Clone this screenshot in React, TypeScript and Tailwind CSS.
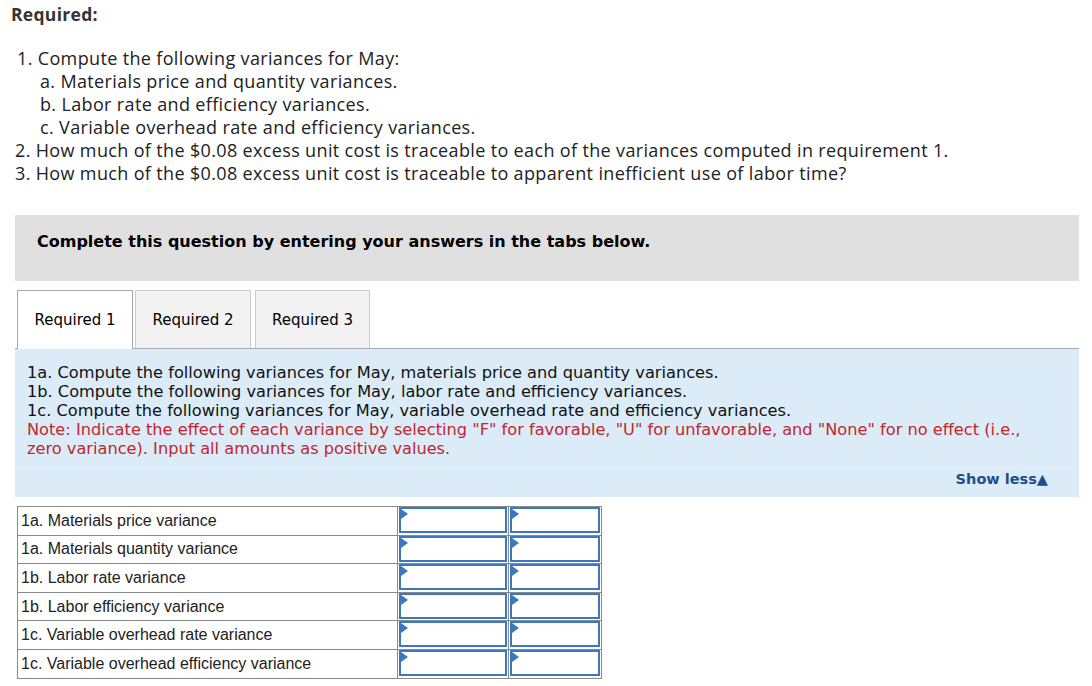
import React from 'react';

const rows = [
  '1a. Materials price variance',
  '1a. Materials quantity variance',
  '1b. Labor rate variance',
  '1b. Labor efficiency variance',
  '1c. Variable overhead rate variance',
  '1c. Variable overhead efficiency variance',
];

const AnswerCell: React.FC<{ width: string }> = ({ width }) => (
  <td className={`${width} p-0 border border-[#8a8a8a] align-top`}>
    <div className="relative h-[26px] border-2 border-[#3d77bf] bg-white mx-[1px]">
      {/* little dropdown flag in the corner */}
      <svg className="absolute left-0 top-0" width="7" height="10" viewBox="0 0 7 10">
        <polygon points="0,0 7,5 0,10" fill="#3d77bf" />
      </svg>
    </div>
  </td>
);

export default function App() {
  return (
    <div className="w-[1092px] h-[686px] bg-white overflow-hidden text-[#222]">
      {/* Requirement list */}
      <div className="pl-[11px] pt-[3px] font-['Open_Sans',sans-serif]">
        <div className="text-[17.5px] font-bold text-[#333] leading-[22px] tracking-[0.3px]">Required:</div>
        <ol className="mt-[22px] text-[18px] leading-[23px] text-[#222] tracking-[0.35px]">
          <li className="pl-[6px]">
            1. Compute the following variances for May:
            <div className="pl-[23px]">
              <div>a. Materials price and quantity variances.</div>
              <div>b. Labor rate and efficiency variances.</div>
              <div>c. Variable overhead rate and efficiency variances.</div>
            </div>
          </li>
          <li className="pl-[4px]">
            2. How much of the $0.08 excess unit cost is traceable to each of the variances computed in requirement 1.
          </li>
          <li className="pl-[4px]">
            3. How much of the $0.08 excess unit cost is traceable to apparent inefficient use of labor time?
          </li>
        </ol>
      </div>

      <div className="ml-[15px] mt-[30px] w-[1064px]">
        {/* Instruction banner */}
        <div className="h-[66px] bg-[#e0e0e0] pl-[22px] pt-[17px] leading-[20px] font-['DejaVu_Sans',Verdana,sans-serif] font-bold text-[16px] text-black">
          Complete this question by entering your answers in the tabs below.
        </div>

        {/* Tabs */}
        <div className="mt-[9px] flex items-end h-[58px] pl-[2px] gap-[2px] font-['DejaVu_Sans',Verdana,sans-serif] text-[15px] text-black">
          <div className="w-[116px] bg-white border border-b-0 border-[#a8a8a8] flex items-center justify-center relative z-10 mb-[-1px] h-[59px] pt-[1px]">
            Required 1
          </div>
          <div className="h-[58px] w-[116px] bg-[#f2f2f2] border border-[#cccccc] border-b-0 flex items-center justify-center pt-[1px]">
            Required 2
          </div>
          <div className="h-[58px] w-[115px] ml-[2px] bg-[#f2f2f2] border border-[#cccccc] border-b-0 flex items-center justify-center pt-[1px]">
            Required 3
          </div>
        </div>

        {/* Instructions panel */}
        <div className="h-[149px] bg-[#dbebf8] border-t border-[#aaaaaa] font-['DejaVu_Sans',Verdana,sans-serif] text-[16.2px] leading-[19px]">
          <div className="h-[120px] pl-[12px] pt-[14px] border-b border-[#e2eefa]">
            <div className="text-[#111]">1a. Compute the following variances for May, materials price and quantity variances.</div>
            <div className="text-[#111]">1b. Compute the following variances for May, labor rate and efficiency variances.</div>
            <div className="text-[#111]">1c. Compute the following variances for May, variable overhead rate and efficiency variances.</div>
            <div className="text-[#c1272d] pr-[36px]">
              Note: Indicate the effect of each variance by selecting "F" for favorable, "U" for unfavorable, and "None" for no effect (i.e., zero variance). Input all amounts as positive values.
            </div>
          </div>
          <div className="h-[28px] flex items-start justify-end pr-[31px] pt-[1px]">
            <span className="font-bold text-[#1d4d8b] text-[14.5px] leading-[18px]">Show less▲</span>
          </div>
        </div>

        {/* Answer grid */}
        <table className="mt-[9px] ml-[2px] border-collapse font-['Liberation_Sans',Arial,sans-serif] text-[16px] text-[#222]">
          <tbody>
            {rows.map((r) => (
              <tr key={r} className="h-[28.6px]">
                <td className="w-[380px] border border-[#8a8a8a] pl-[3px] py-0 leading-[26px]">{r}</td>
                <AnswerCell width="w-[111px]" />
                <AnswerCell width="w-[93px]" />
              </tr>
            ))}
          </tbody>
        </table>
      </div>
    </div>
  );
}
